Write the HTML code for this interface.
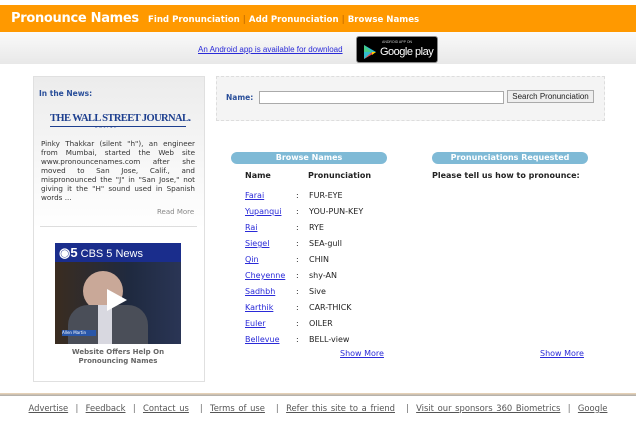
<!DOCTYPE html>
<html><head><style>
body{margin:0;width:640px;height:421px;background:#fff;font-family:"DejaVu Sans",Verdana,sans-serif;position:relative;overflow:hidden;font-size:8px;color:#222}
.a{position:absolute}
a{color:#2a2ad8;text-decoration:underline}
.top{left:0;top:5px;width:636px;height:27px;background:#ff9900}
.strip{left:0;top:32px;width:636px;height:32px;background:linear-gradient(#fafafa,#e8e8e8)}
.pill{background:#7fbad6;color:#fff;font-weight:bold;text-align:center;border-radius:7px;height:12px;line-height:12px;font-size:8px}
</style></head><body>
<div class="a top"></div>
<div class="a" style="left:11px;top:11px;color:#fff;font:bold 13px 'DejaVu Sans',sans-serif;letter-spacing:-0.3px">Pronounce Names</div>
<div class="a" style="left:148px;top:15px;color:#fff;font-weight:bold;font-size:8.6px;white-space:nowrap">Find Pronunciation <span style="color:#c87000">|</span> Add Pronunciation <span style="color:#c87000">|</span> Browse Names</div>
<div class="a strip"></div>
<div class="a" style="left:198px;top:45px;font-family:'Liberation Sans',sans-serif;font-size:8px"><a href="#">An Android app is available for download</a></div>
<div class="a" style="left:356px;top:36px;width:82px;height:27px;background:#000;border-radius:3px;border:1px solid #888;box-sizing:border-box">
<div class="a" style="left:25px;top:3px;color:#ccc;font-size:3.5px;font-family:'Liberation Sans';white-space:nowrap">ANDROID APP ON</div>
<svg class="a" style="left:7px;top:8px" width="12" height="14"><polygon points="0,0 12,7 0,14" fill="#3bc"/><polygon points="0,0 8,7 0,7" fill="#4c8"/><polygon points="0,14 8,7 12,7" fill="#e44"/><polygon points="8,7 12,7 8,10" fill="#fc0"/></svg>
<div class="a" style="left:23px;top:9px;color:#fff;font:11px 'Liberation Sans',sans-serif;letter-spacing:-0.5px;white-space:nowrap">Google play</div></div>

<div class="a" style="left:33px;top:76px;width:170px;height:304px;border:1px solid #e0e0e0;background:linear-gradient(#ececec,#fff 50%)"></div>
<div class="a" style="left:39px;top:89px;color:#2a4f9a;font-weight:bold;font-size:7.5px">In the News:</div>
<div class="a" style="left:50px;top:113px;width:136px;text-align:center;white-space:nowrap;color:#1d3f8f;font:bold 10.5px 'Liberation Serif',serif;letter-spacing:-0.6px">THE WALL STREET JOURNAL.</div>
<div class="a" style="left:95px;top:125px;color:#1d3f8f;font-size:3px;letter-spacing:2px">ONLINE</div>
<div class="a" style="left:50px;top:126px;width:136px;height:1px;background:#1d3f8f"></div>
<div class="a" style="left:41px;top:139px;width:154px;font-size:7.2px;line-height:9px;text-align:justify;color:#333">Pinky Thakkar (silent "h"), an engineer from Mumbai, started the Web site www.pronouncenames.com after she moved to San Jose, Calif., and mispronounced the "J" in "San Jose," not giving it the "H" sound used in Spanish words ...</div>
<div class="a" style="left:157px;top:208px;color:#888;font-size:7px">Read More</div>
<div class="a" style="left:40px;top:226px;width:157px;height:1px;background:#ddd"></div>
<div class="a" style="left:55px;top:243px;width:126px;height:101px;background:linear-gradient(90deg,#3a2c20,#1f2a40 60%,#2a3555);overflow:hidden">
<div class="a" style="left:0;top:0;width:126px;height:19px;background:#1a2d8c;color:#fff;font:11px 'Liberation Sans';line-height:19px;white-space:nowrap"><span style="margin-left:4px;font-size:13px;font-weight:bold">◉5</span> CBS 5 News</div>
<div class="a" style="left:28px;top:28px;width:40px;height:40px;border-radius:50%;background:#c9a898"></div>
<div class="a" style="left:13px;top:62px;width:80px;height:39px;background:#4a4e58;border-radius:20px 20px 0 0"></div>
<div class="a" style="left:43px;top:62px;width:14px;height:39px;background:#d8d8e0"></div>
<svg class="a" style="left:52px;top:46px" width="20" height="22"><polygon points="0,0 20,11 0,22" fill="#fff"/></svg>
<div class="a" style="left:7px;top:87px;width:34px;height:6px;background:#2956a8;color:#fff;font-size:4px;line-height:6px;white-space:nowrap">Allen Martin</div></div>
<div class="a" style="left:55px;top:348px;width:126px;text-align:center;color:#666;font-weight:bold;font-size:7px;line-height:9px">Website Offers Help On Pronouncing Names</div>

<div class="a" style="left:216px;top:76px;width:387px;height:43px;border:1px dashed #ddd;background:#f4f4f4"></div>
<div class="a" style="left:226px;top:93px;color:#2a4f9a;font-weight:bold;font-size:7.5px">Name:</div>
<div class="a" style="left:259px;top:91px;width:243px;height:11px;border:1px solid #aaa;background:#fff"></div>
<div class="a" style="left:507px;top:90px;width:87px;height:13px;border:1px solid #aaa;background:#eee;box-sizing:border-box;font:8px 'Liberation Sans';text-align:center;line-height:11px">Search Pronunciation</div>

<div class="a pill" style="left:231px;top:152px;width:156px">Browse Names</div>
<div class="a pill" style="left:432px;top:152px;width:156px">Pronunciations Requested</div>
<div class="a" style="left:245px;top:171px;font-weight:bold">Name</div>
<div class="a" style="left:308px;top:171px;font-weight:bold">Pronunciation</div>
<div class="a" style="left:432px;top:171px;font-weight:bold">Please tell us how to pronounce:</div>

<div class="a" style="left:245px;top:188px;line-height:16px;font-size:8px"><a href="#">Farai</a><br><a href="#">Yupanqui</a><br><a href="#">Rai</a><br><a href="#">Siegel</a><br><a href="#">Qin</a><br><a href="#">Cheyenne</a><br><a href="#">Sadhbh</a><br><a href="#">Karthik</a><br><a href="#">Euler</a><br><a href="#">Bellevue</a></div>
<div class="a" style="left:296px;top:188px;line-height:16px">:<br>:<br>:<br>:<br>:<br>:<br>:<br>:<br>:<br>:</div>
<div class="a" style="left:309px;top:188px;line-height:16px">FUR-EYE<br>YOU-PUN-KEY<br>RYE<br>SEA-gull<br>CHIN<br>shy-AN<br>Sive<br>CAR-THICK<br>OILER<br>BELL-view</div>
<div class="a" style="left:340px;top:349px"><a href="#">Show More</a></div>
<div class="a" style="left:540px;top:349px"><a href="#">Show More</a></div>

<div class="a" style="left:0;top:393px;width:636px;height:3px;background:linear-gradient(#f0d8b8,#aaa)"></div>
<div class="a" style="left:0;top:403px;width:636px;text-align:center;color:#666;font-size:8.4px;white-space:nowrap;word-spacing:1px"><a style="color:#555" href="#">Advertise</a> &nbsp;| &nbsp;<a style="color:#555" href="#">Feedback</a> &nbsp;| &nbsp;<a style="color:#555" href="#">Contact us</a> &nbsp; | &nbsp;<a style="color:#555" href="#">Terms of use</a> &nbsp; | &nbsp;<a style="color:#555" href="#">Refer this site to a friend</a> &nbsp; | &nbsp;<a style="color:#555" href="#">Visit our sponsors 360 Biometrics</a> &nbsp;| &nbsp;<a style="color:#555" href="#">Google</a></div>
</body></html>
